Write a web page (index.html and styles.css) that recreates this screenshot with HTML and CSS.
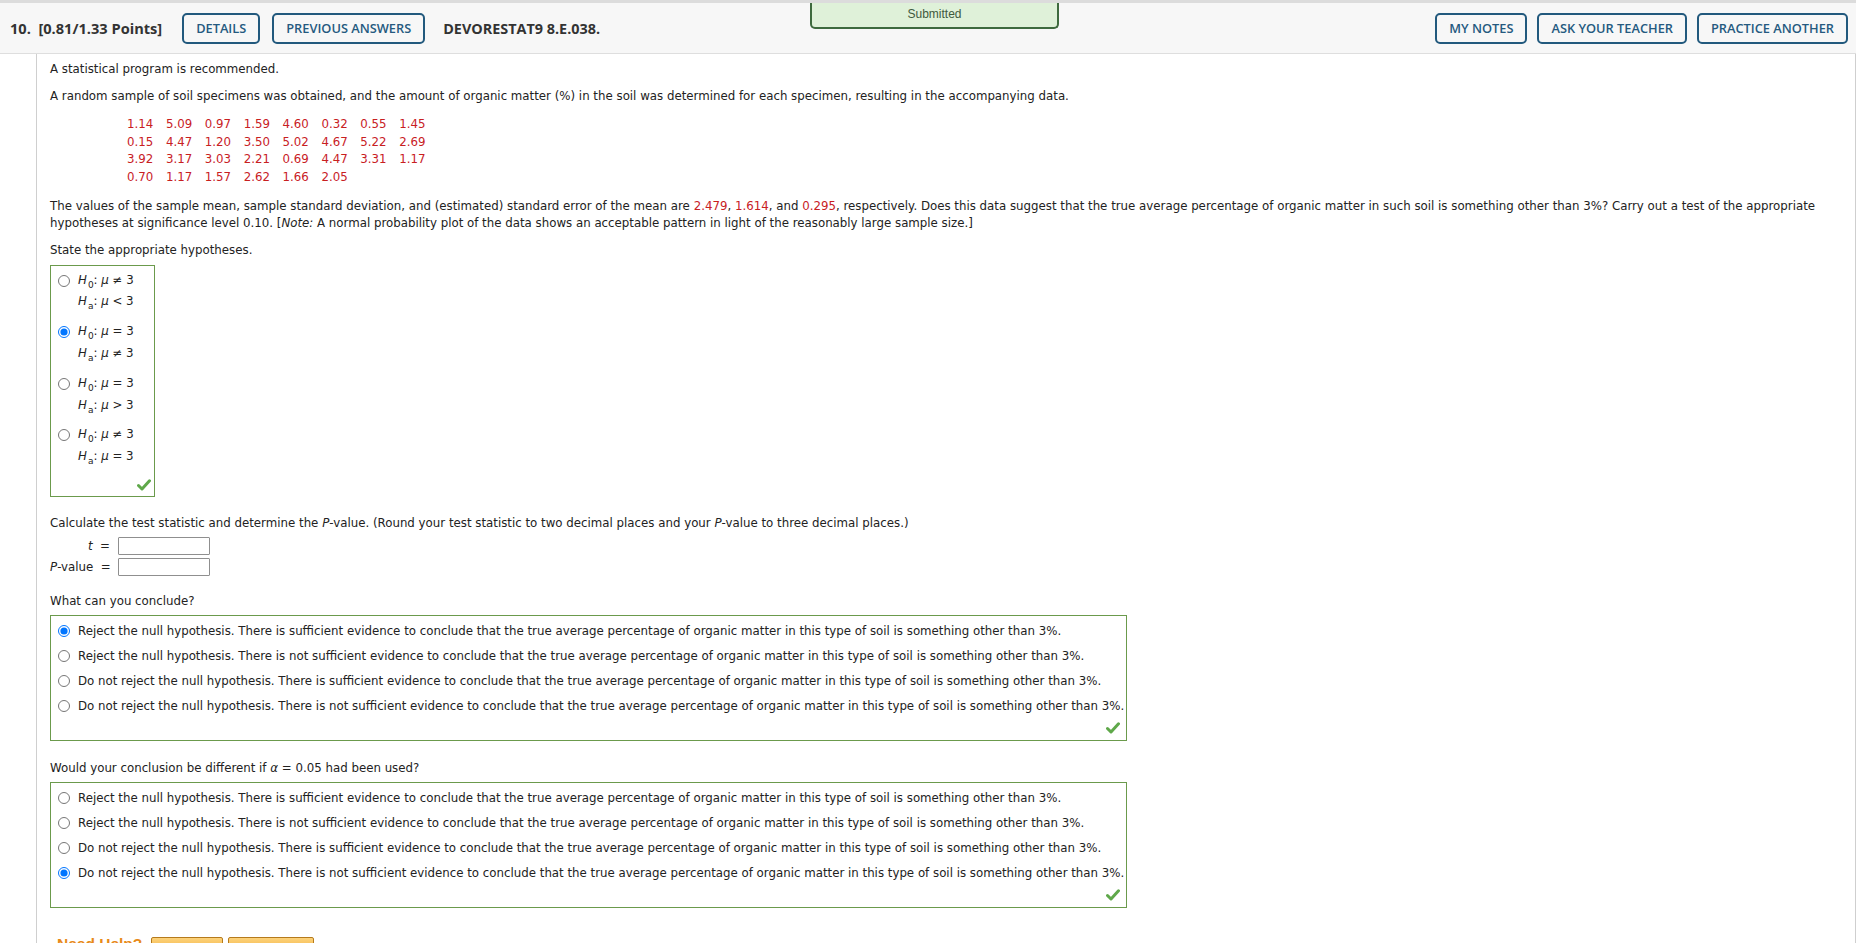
FILE: index.html
```html
<!DOCTYPE html>
<html lang="en">
<head>
<meta charset="utf-8">
<title>Question 10</title>
<link rel="stylesheet" href="styles.css">
</head>
<body>
<div class="page">
  <div class="topband"></div>
  <header class="qhead">
    <div class="qnum">10.&nbsp; [0.81/1.33 Points]</div>
    <div class="left-btns">
      <button class="btn">DETAILS</button>
      <button class="btn">PREVIOUS ANSWERS</button>
    </div>
    <div class="qcode">DEVORESTAT9 8.E.038.</div>
    <div class="status">Submitted</div>
    <div class="right-btns">
      <button class="btn">MY NOTES</button>
      <button class="btn">ASK YOUR TEACHER</button>
      <button class="btn">PRACTICE ANOTHER</button>
    </div>
  </header>

  <main class="content">
    <p class="txt first">A statistical program is recommended.</p>
    <p class="txt">A random sample of soil specimens was obtained, and the amount of organic matter (%) in the soil was determined for each specimen, resulting in the accompanying data.</p>

    <div class="data">
      <span>1.14</span><span>5.09</span><span>0.97</span><span>1.59</span><span>4.60</span><span>0.32</span><span>0.55</span><span>1.45</span>
      <span>0.15</span><span>4.47</span><span>1.20</span><span>3.50</span><span>5.02</span><span>4.67</span><span>5.22</span><span>2.69</span>
      <span>3.92</span><span>3.17</span><span>3.03</span><span>2.21</span><span>0.69</span><span>4.47</span><span>3.31</span><span>1.17</span>
      <span>0.70</span><span>1.17</span><span>1.57</span><span>2.62</span><span>1.66</span><span>2.05</span>
    </div>

    <p class="txt values">The values of the sample mean, sample standard deviation, and (estimated) standard error of the mean are <span class="red">2.479</span>, <span class="red">1.614</span>, and <span class="red">0.295</span>, respectively. Does this data suggest that the true average percentage of organic matter in such soil is something other than 3%? Carry out a test of the appropriate hypotheses at significance level 0.10. [<i>Note:</i> A normal probability plot of the data shows an acceptable pattern in light of the reasonably large sample size.]</p>

    <p class="txt">State the appropriate hypotheses.</p>

    <div class="hyp-box">
      <label class="hyp">
        <input type="radio" name="hyp">
        <span class="hyp-lines">
          <span class="hline"><i>H</i><sub>0</sub>: <i>μ</i> ≠ 3</span>
          <span class="hline"><i>H</i><sub>a</sub>: <i>μ</i> &lt; 3</span>
        </span>
      </label>
      <label class="hyp">
        <input type="radio" name="hyp" checked>
        <span class="hyp-lines">
          <span class="hline"><i>H</i><sub>0</sub>: <i>μ</i> = 3</span>
          <span class="hline"><i>H</i><sub>a</sub>: <i>μ</i> ≠ 3</span>
        </span>
      </label>
      <label class="hyp">
        <input type="radio" name="hyp">
        <span class="hyp-lines">
          <span class="hline"><i>H</i><sub>0</sub>: <i>μ</i> = 3</span>
          <span class="hline"><i>H</i><sub>a</sub>: <i>μ</i> &gt; 3</span>
        </span>
      </label>
      <label class="hyp">
        <input type="radio" name="hyp">
        <span class="hyp-lines">
          <span class="hline"><i>H</i><sub>0</sub>: <i>μ</i> ≠ 3</span>
          <span class="hline"><i>H</i><sub>a</sub>: <i>μ</i> = 3</span>
        </span>
      </label>
      <div class="check-row">
        <svg class="check" viewBox="0 0 14 12" width="14" height="12"><path d="M1.5 6.5 L5 10 L12.5 1.8" fill="none" stroke="#5fa84a" stroke-width="3" stroke-linecap="round" stroke-linejoin="round"/></svg>
      </div>
    </div>

    <p class="txt calc">Calculate the test statistic and determine the <i>P</i>-value. (Round your test statistic to two decimal places and your <i>P</i>-value to three decimal places.)</p>
    <div class="answers">
      <span class="alabel"><i>t</i>&nbsp; =</span><input class="abox" type="text">
      <span class="alabel"><i>P</i>-value&nbsp; =</span><input class="abox" type="text">
    </div>

    <p class="txt q2">What can you conclude?</p>
    <div class="choice-box">
      <label class="opt"><input type="radio" name="c1" checked><span>Reject the null hypothesis. There is sufficient evidence to conclude that the true average percentage of organic matter in this type of soil is something other than 3%.</span></label>
      <label class="opt"><input type="radio" name="c1"><span>Reject the null hypothesis. There is not sufficient evidence to conclude that the true average percentage of organic matter in this type of soil is something other than 3%.</span></label>
      <label class="opt"><input type="radio" name="c1"><span>Do not reject the null hypothesis. There is sufficient evidence to conclude that the true average percentage of organic matter in this type of soil is something other than 3%.</span></label>
      <label class="opt"><input type="radio" name="c1"><span>Do not reject the null hypothesis. There is not sufficient evidence to conclude that the true average percentage of organic matter in this type of soil is something other than 3%.</span></label>
      <div class="check-row">
        <svg class="check" viewBox="0 0 14 12" width="14" height="12"><path d="M1.5 6.5 L5 10 L12.5 1.8" fill="none" stroke="#5fa84a" stroke-width="3" stroke-linecap="round" stroke-linejoin="round"/></svg>
      </div>
    </div>

    <p class="txt q3">Would your conclusion be different if <i>α</i> = 0.05 had been used?</p>
    <div class="choice-box">
      <label class="opt"><input type="radio" name="c2"><span>Reject the null hypothesis. There is sufficient evidence to conclude that the true average percentage of organic matter in this type of soil is something other than 3%.</span></label>
      <label class="opt"><input type="radio" name="c2"><span>Reject the null hypothesis. There is not sufficient evidence to conclude that the true average percentage of organic matter in this type of soil is something other than 3%.</span></label>
      <label class="opt"><input type="radio" name="c2"><span>Do not reject the null hypothesis. There is sufficient evidence to conclude that the true average percentage of organic matter in this type of soil is something other than 3%.</span></label>
      <label class="opt"><input type="radio" name="c2" checked><span>Do not reject the null hypothesis. There is not sufficient evidence to conclude that the true average percentage of organic matter in this type of soil is something other than 3%.</span></label>
      <div class="check-row">
        <svg class="check" viewBox="0 0 14 12" width="14" height="12"><path d="M1.5 6.5 L5 10 L12.5 1.8" fill="none" stroke="#5fa84a" stroke-width="3" stroke-linecap="round" stroke-linejoin="round"/></svg>
      </div>
    </div>

    <div class="help">
      <span class="help-title">Need Help?</span>
      <button class="hbtn read">Read It</button>
      <button class="hbtn tutor">Talk to a Tutor</button>
    </div>
  </main>
</div>
</body>
</html>
```

FILE: styles.css
```css
* { box-sizing: border-box; }
html, body { margin: 0; padding: 0; background: #fff; }
body {
  font-family: "DejaVu Sans", Verdana, sans-serif;
  font-size: 11.8px;
  color: #222;
  overflow: hidden;
}
.page { width: 1856px; height: 943px; overflow: hidden; }
.topband { height: 3px; background: #dcdcdc; }

.qhead {
  position: relative;
  display: flex;
  align-items: center;
  height: 51px;
  padding: 0 8px 0 10px;
  background: #f7f7f7;
  border-bottom: 1px solid #dedede;
  font-family: "Open Sans", sans-serif;
}
.qnum { font-weight: 700; font-size: 14.6px; color: #333; margin-right: 20px; white-space: nowrap; }
.left-btns, .right-btns { display: flex; gap: 10px; }
.left-btns { gap: 12px; }
.right-btns { margin-left: auto; }
.btn {
  height: 31px;
  padding: 0 12px;
  background: transparent;
  border: 2px solid #22597d;
  border-radius: 5px;
  font-family: "Open Sans", sans-serif;
  font-weight: 600;
  font-size: 12.8px;
  color: #255a7f;
  white-space: nowrap;
}
.qcode { margin-left: 18px; font-weight: 700; font-size: 14.4px; color: #333; white-space: nowrap; }
.status {
  position: absolute;
  left: 810px;
  top: 0;
  width: 249px;
  height: 26px;
  padding-top: 3px;
  background: #dff1d9;
  border: 2px solid #3e6a3e;
  border-top: none;
  border-radius: 0 0 5px 5px;
  font-family: "Liberation Sans", Arial, sans-serif;
  font-size: 12px;
  line-height: 16px;
  color: #3e5a3e;
  text-align: center;
}

.content {
  margin-left: 36px;
  padding: 7px 0 0 13px;
  border-left: 1px solid #cfcfcf;
  border-right: 1px solid #cfcfcf;
  height: 889px;
}
.txt { margin: 10px 0 0; line-height: 17px; }
.txt.first { margin-top: 0; }
.values { margin-top: 12px; line-height: 16.7px; }
.red { color: #c8201f; }

.data {
  display: grid;
  grid-template-columns: repeat(8, 38.9px);
  grid-auto-rows: 17.8px;
  align-items: center;
  margin: 10px 0 0 77px;
  color: #c8201f;
}

.hyp-box {
  width: 105px;
  margin-top: 6px;
  padding: 4px 0 2px 7px;
  border: 1px solid #6b9a4c;
  display: flex;
  flex-direction: column;
  gap: 8px;
}
.hyp { display: flex; align-items: flex-start; }
.hyp input, .opt input {
  width: 12px; height: 12px;
  margin: 0 8px 0 0;
  flex: none;
}
.hyp input { margin-top: 5px; }
.hyp-lines { display: flex; flex-direction: column; }
.hline { line-height: 21.8px; white-space: nowrap; }
.hline i { font-style: italic; }
.hline sub { font-size: 9px; vertical-align: -4px; line-height: 0; margin-left: 1px; }
.check-row { display: flex; justify-content: flex-end; height: 18px; align-items: center; padding-right: 4px; }
.hyp-box .check-row { padding-right: 3px; }

.calc { margin-top: 18px; }
.answers {
  display: grid;
  grid-template-columns: 60px 92px;
  column-gap: 8px;
  row-gap: 3px;
  align-items: center;
  margin-top: 5px;
}
.alabel { text-align: right; line-height: 18px; white-space: nowrap; }
.abox {
  width: 92px; height: 18px;
  border: 1px solid #8f8f8f;
  border-radius: 1px;
  padding: 0;
  background: #fff;
}

.q2 { margin-top: 17px; }
.q3 { margin-top: 19px; }
.choice-box {
  width: 1077px;
  margin-top: 5px;
  padding: 3px 0 3px 7px;
  border: 1px solid #6b9a4c;
}
.opt { display: flex; align-items: center; height: 25px; white-space: nowrap; }
.choice-box .check-row { padding-right: 6px; }

.help { display: flex; align-items: flex-start; margin-top: 27px; padding-left: 7px; gap: 9px; }
.help-title {
  font-family: "Liberation Sans", Arial, sans-serif;
  font-weight: 700;
  font-size: 15.5px;
  color: #e88a1a;
  line-height: 18px;
}
.hbtn {
  height: 20px;
  margin-top: 2px;
  border: 1px solid #b57a1c;
  border-radius: 2px;
  background: linear-gradient(#fcd27a, #f3a732);
  font-family: "Liberation Sans", Arial, sans-serif;
  font-size: 11px;
  color: #222;
  padding: 0;
}
.hbtn.read { width: 72px; }
.hbtn.tutor { width: 86px; margin-left: -4px; }
```
